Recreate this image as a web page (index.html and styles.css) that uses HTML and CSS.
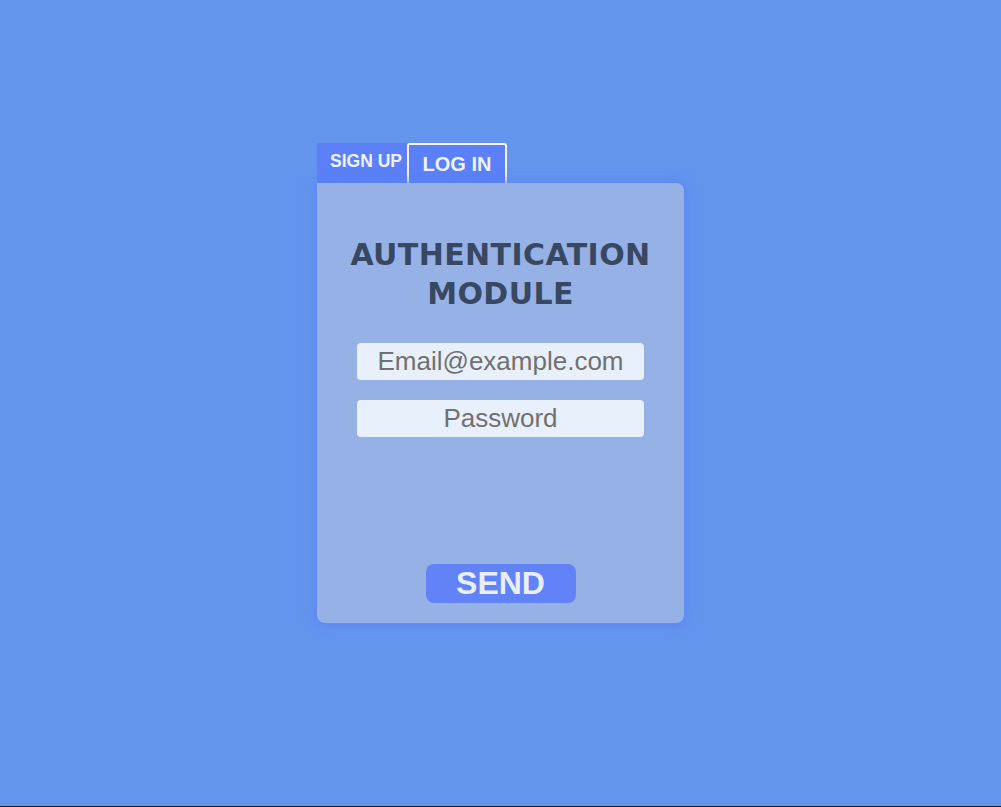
FILE: index.html
```html
<!DOCTYPE html>
<html lang="en">
<head>
<meta charset="utf-8">
<title>Authentication Module</title>
<link rel="stylesheet" href="styles.css">
</head>
<body>
<main class="page">
  <section class="auth">
    <nav class="tabs">
      <button class="tab tab-signup" type="button">SIGN UP</button>
      <button class="tab tab-login" type="button">LOG IN</button>
    </nav>
    <form class="card">
      <h1 class="title">AUTHENTICATION<br>MODULE</h1>
      <input class="field" type="email" placeholder="Email@example.com">
      <input class="field" type="password" placeholder="Password">
      <div class="spacer"></div>
      <button class="send" type="button">SEND</button>
    </form>
  </section>
</main>
</body>
</html>
```

FILE: styles.css
```css
html {
  margin: 0;
  background: #0d1b2a;
}
body {
  margin: 0;
  height: 806px;
  background: #6495ed;
  overflow: hidden;
}
.page {
  display: flex;
  justify-content: center;
  padding-top: 143px;
}
.auth {
  width: 367px;
  display: flex;
  flex-direction: column;
}
.tabs {
  display: flex;
  height: 40px;
}
.tab {
  margin: 0;
  padding: 0;
  border: none;
  font-family: "Liberation Sans", Arial, sans-serif;
  font-weight: bold;
  color: #eef2ff;
  background: #5b80f8;
  cursor: pointer;
}
.tab-signup {
  width: 90px;
  font-size: 17.5px;
  padding-bottom: 4px;
  padding-left: 8px;
}
.tab-login {
  width: 100px;
  font-size: 20px;
  border: 2px solid #f2f5ff;
  border-bottom: none;
  border-radius: 3px 3px 0 0;
  padding-top: 1px;
}
.card {
  height: 440px;
  box-sizing: border-box;
  background: #96b1e6;
  border-radius: 0 8px 8px 8px;
  box-shadow: 0 0 12px 2px rgba(90, 128, 250, 0.75);
  display: flex;
  flex-direction: column;
  align-items: center;
  padding: 52px 0 20px;
}
.title {
  margin: 0 0 30px;
  font-family: "DejaVu Sans", sans-serif;
  font-weight: bold;
  font-size: 30px;
  line-height: 39px;
  letter-spacing: 0.4px;
  text-align: center;
  color: #394862;
}
.field {
  width: 287px;
  height: 37px;
  box-sizing: border-box;
  margin: 0 0 20px;
  border: none;
  border-radius: 4px;
  background: #e8f0fb;
  font-family: "Liberation Sans", Arial, sans-serif;
  font-size: 26px;
  text-align: center;
  color: #6b6b6b;
  padding: 0;
}
.field::placeholder {
  color: #707070;
  opacity: 1;
}
.spacer {
  flex: 1;
}
.send {
  width: 150px;
  height: 39px;
  border: none;
  border-radius: 8px;
  background: #6283f8;
  color: #e8eefe;
  font-family: "Liberation Sans", Arial, sans-serif;
  font-weight: bold;
  font-size: 32px;
  padding: 0;
  cursor: pointer;
}
```
